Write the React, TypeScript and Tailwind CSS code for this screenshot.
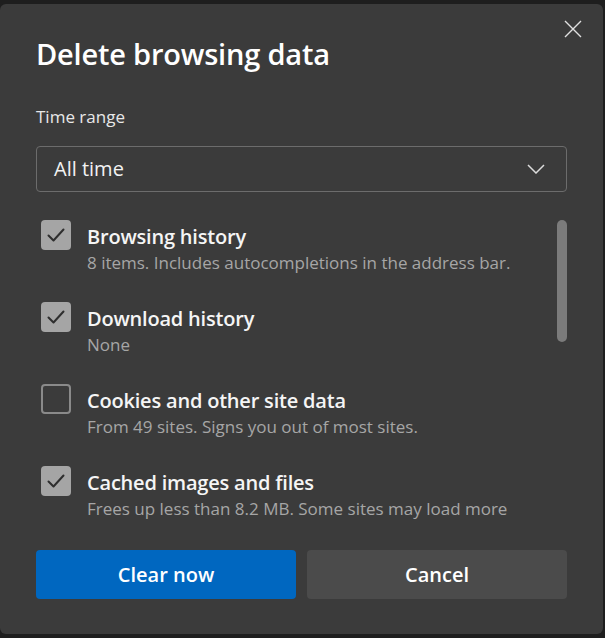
import React, { useState } from 'react';

const font = { fontFamily: '"Open Sans", "Noto Sans", sans-serif' };

type Item = { id: string; label: string; sub: string; checked: boolean };

const initialItems: Item[] = [
    { id: 'history', label: 'Browsing history', sub: '8 items. Includes autocompletions in the address bar.', checked: true },
    { id: 'downloads', label: 'Download history', sub: 'None', checked: true },
    { id: 'cookies', label: 'Cookies and other site data', sub: 'From 49 sites. Signs you out of most sites.', checked: false },
    { id: 'cache', label: 'Cached images and files', sub: 'Frees up less than 8.2 MB. Some sites may load more', checked: true },
];

const CheckBox: React.FC<{ checked: boolean; onToggle: () => void }> = ({ checked, onToggle }) => (
    <button
        onClick={onToggle}
        className={
            checked
                ? 'w-[30px] h-[30px] shrink-0 rounded-[4px] bg-[#a5a5a5]'
                : 'w-[30px] h-[30px] shrink-0 rounded-[4px] border-2 border-[#8a8a8a] bg-transparent'
        }
    >
        {checked && (
            <svg width="30" height="30" viewBox="0 0 30 30" fill="none">
                <path d="M7.5 15.5 L12.5 20.5 L22.5 9.5" stroke="#2e2e2e" strokeWidth="2" strokeLinecap="round" strokeLinejoin="round" />
            </svg>
        )}
    </button>
);

const App: React.FC = () => {
    const [items, setItems] = useState(initialItems);

    const toggle = (id: string) =>
        setItems(items.map(i => (i.id === id ? { ...i, checked: !i.checked } : i)));

    return (
        <div className="w-[605px] h-[638px] bg-[#1e1e1e] pt-[4px] overflow-hidden" style={font}>
            <div className="relative w-[603px] h-[630px] bg-[#3b3b3b] rounded-[6px] flex flex-col pt-[31px] px-[36px]">
                {/* close */}
                <button className="absolute top-[10px] right-[15px] w-[30px] h-[30px] flex items-center justify-center">
                    <svg width="18" height="18" viewBox="0 0 18 18" fill="none">
                        <path d="M1 1 L17 17 M17 1 L1 17" stroke="#e0e0e0" strokeWidth="1.4" />
                    </svg>
                </button>

                <h1 className="text-[29px] leading-[38px] font-semibold text-white tracking-[-0.2px]">
                    Delete browsing data
                </h1>

                <div className="text-[17px] leading-[24px] text-[#e8e8e8] mt-[32px]">Time range</div>

                <div className="mt-[17px] h-[46px] shrink-0 border border-[#6c6c6c] rounded-[4px] flex items-center justify-between pl-[17px] pr-[21px]">
                    <span className="text-[20px] text-[#f2f2f2]">All time</span>
                    <svg width="18" height="10" viewBox="0 0 18 10" fill="none">
                        <path d="M1 1 L9 9 L17 1" stroke="#dcdcdc" strokeWidth="1.5" />
                    </svg>
                </div>

                <div className="relative mt-[28px] h-[306px] shrink-0 overflow-hidden">
                    <div className="flex flex-col gap-[26px] pr-[40px]">
                        {items.map(item => (
                            <div key={item.id} className="flex items-start">
                                <div className="pl-[5px]">
                                    <CheckBox checked={item.checked} onToggle={() => toggle(item.id)} />
                                </div>
                                <div className="ml-[16px] mt-[4px]">
                                    <div className="text-[20px] leading-[26px] font-semibold text-[#f5f5f5] tracking-[-0.2px]">{item.label}</div>
                                    <div className="text-[17px] leading-[26px] text-[#a6a6a6] whitespace-nowrap">{item.sub}</div>
                                </div>
                            </div>
                        ))}
                    </div>
                    <div className="absolute right-0 top-0 w-[10px] h-[122px] rounded-full bg-[#7b7b7b]" />
                </div>

                <div className="mt-[24px] flex gap-[11px]">
                    <button className="flex-1 h-[49px] rounded-[4px] bg-[#0067c0] text-white text-[20px] font-semibold">
                        Clear now
                    </button>
                    <button className="flex-1 h-[49px] rounded-[4px] bg-[#4b4b4b] text-white text-[20px] font-semibold">
                        Cancel
                    </button>
                </div>
            </div>
        </div>
    );
};

export default App;
